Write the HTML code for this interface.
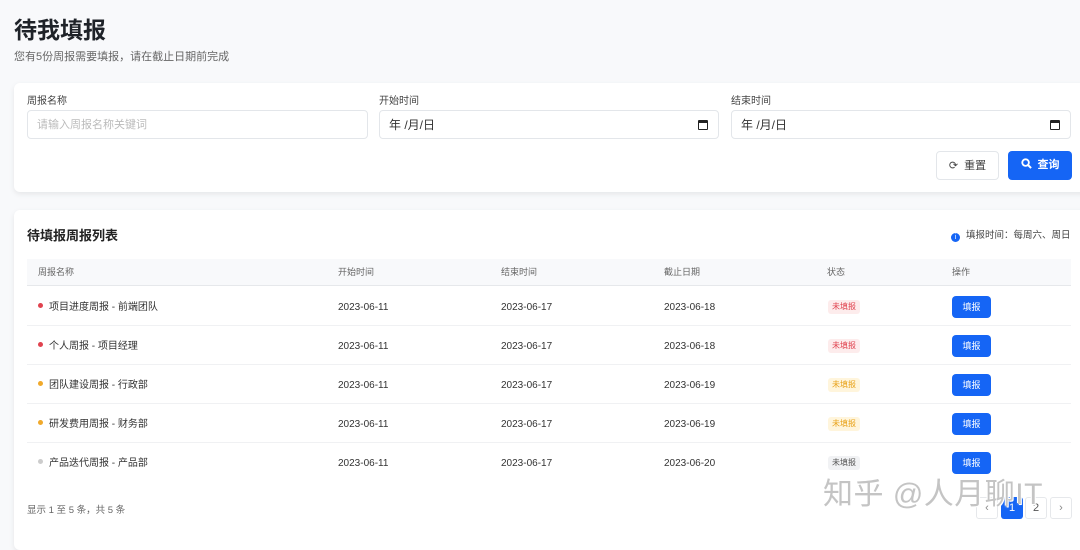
<!DOCTYPE html>
<html><head><meta charset="utf-8"><style>
*{margin:0;padding:0;box-sizing:border-box}
body{width:1080px;height:533px;overflow:hidden;background:#f8f9fb;font-family:"Liberation Sans","Noto Sans CJK SC",sans-serif;color:#333;position:relative}
.abs{position:absolute}
h1{position:absolute;left:14px;top:11px;font-size:23px;font-weight:700;color:#1f2329}
.sub{left:14px;top:48px;font-size:11px;color:#666}
.card{background:#fff;border-radius:6px;box-shadow:0 2px 6px rgba(0,0,0,.08)}
.lbl{font-size:10px;color:#444;line-height:12px}
.inp{height:29px;border:1px solid #e3e6ea;border-radius:4px;font-size:11px;color:#bbb;padding:0 9px;line-height:29px}
.inp.d{color:#333;font-size:12px}
.cal{position:absolute;right:10px;top:9px;width:10px;height:10px;border:1.5px solid #222;border-top-width:3px;border-radius:1px}
.btn{height:29px;border-radius:4px;font-size:11px;line-height:29px;text-align:center}
.th{font-size:9px;color:#666;line-height:12px}
.td{font-size:10px;color:#333;line-height:14px}
.dot{width:5px;height:5px;border-radius:50%;display:inline-block;margin-right:6px;vertical-align:2px}
.tag{font-size:8px;padding:2px 4px;border-radius:3px;line-height:10px}
.fb{width:39px;height:22px;background:#1565f5;color:#fff;border-radius:4px;font-size:9px;line-height:22px;text-align:center}
.line{left:27px;width:1044px;height:1px;background:#f0f1f3}
</style></head><body>
<h1>待我填报</h1>
<div class="abs sub">您有5份周报需要填报，请在截止日期前完成</div>

<div class="abs card" style="left:14px;top:83px;width:1080px;height:109px"></div>
<div class="abs lbl" style="left:27px;top:96px">周报名称</div>
<div class="abs lbl" style="left:379px;top:96px">开始时间</div>
<div class="abs lbl" style="left:731px;top:96px">结束时间</div>
<div class="abs inp" style="left:27px;top:110px;width:341px">请输入周报名称关键词</div>
<div class="abs inp d" style="left:379px;top:110px;width:340px">年 /月/日<span class="cal"></span></div>
<div class="abs inp d" style="left:731px;top:110px;width:340px">年 /月/日<span class="cal"></span></div>
<div class="abs btn" style="left:936px;top:151px;width:63px;border:1px solid #e3e6ea;color:#444">⟳&nbsp; 重置</div>
<div class="abs btn" style="left:1008px;top:151px;width:64px;background:#1565f5;color:#fff;font-weight:700">
<svg width="11" height="11" viewBox="0 0 12 12" style="vertical-align:-1px;margin-right:6px"><circle cx="5" cy="5" r="3.6" fill="none" stroke="#fff" stroke-width="2"/><path d="M7.6 7.6L11 11" stroke="#fff" stroke-width="2.2"/></svg>查询</div>

<div class="abs card" style="left:14px;top:210px;width:1080px;height:340px"></div>
<div class="abs" style="left:27px;top:225px;font-size:13px;font-weight:700;color:#222">待填报周报列表</div>
<div class="abs" style="left:951px;top:227px;font-size:9.5px;color:#444"><span style="display:inline-block;width:9px;height:9px;border-radius:50%;background:#1565f5;color:#fff;font-size:7px;line-height:9px;text-align:center;margin-right:6px;vertical-align:-1px">i</span>填报时间：每周六、周日</div>
<div class="abs" style="left:27px;top:259px;width:1044px;height:27px;background:#f8f9fb;border-bottom:1px solid #e6e8eb"></div>
<div class="abs th" style="left:38px;top:266px">周报名称</div>
<div class="abs th" style="left:338px;top:266px">开始时间</div>
<div class="abs th" style="left:501px;top:266px">结束时间</div>
<div class="abs th" style="left:664px;top:266px">截止日期</div>
<div class="abs th" style="left:827px;top:266px">状态</div>
<div class="abs th" style="left:952px;top:266px">操作</div>

<div class="abs line" style="top:325px"></div>
<div class="abs line" style="top:364px"></div>
<div class="abs line" style="top:403px"></div>
<div class="abs line" style="top:442px"></div>

<div class="abs td" style="left:38px;top:301px"><span class="dot" style="background:#e0434f"></span>项目进度周报 - 前端团队</div>
<div class="abs td" style="left:38px;top:340px"><span class="dot" style="background:#e0434f"></span>个人周报 - 项目经理</div>
<div class="abs td" style="left:38px;top:379px"><span class="dot" style="background:#f0a92b"></span>团队建设周报 - 行政部</div>
<div class="abs td" style="left:38px;top:418px"><span class="dot" style="background:#f0a92b"></span>研发费用周报 - 财务部</div>
<div class="abs td" style="left:38px;top:457px"><span class="dot" style="background:#ccc"></span>产品迭代周报 - 产品部</div>

<div class="abs td" style="left:338px;top:301px">2023-06-11</div><div class="abs td" style="left:501px;top:301px">2023-06-17</div><div class="abs td" style="left:664px;top:301px">2023-06-18</div>
<div class="abs td" style="left:338px;top:340px">2023-06-11</div><div class="abs td" style="left:501px;top:340px">2023-06-17</div><div class="abs td" style="left:664px;top:340px">2023-06-18</div>
<div class="abs td" style="left:338px;top:379px">2023-06-11</div><div class="abs td" style="left:501px;top:379px">2023-06-17</div><div class="abs td" style="left:664px;top:379px">2023-06-19</div>
<div class="abs td" style="left:338px;top:418px">2023-06-11</div><div class="abs td" style="left:501px;top:418px">2023-06-17</div><div class="abs td" style="left:664px;top:418px">2023-06-19</div>
<div class="abs td" style="left:338px;top:457px">2023-06-11</div><div class="abs td" style="left:501px;top:457px">2023-06-17</div><div class="abs td" style="left:664px;top:457px">2023-06-20</div>

<div class="abs tag" style="left:828px;top:300px;background:#fdecec;color:#e0434f">未填报</div>
<div class="abs tag" style="left:828px;top:339px;background:#fdecec;color:#e0434f">未填报</div>
<div class="abs tag" style="left:828px;top:378px;background:#fff5dc;color:#e8a21a">未填报</div>
<div class="abs tag" style="left:828px;top:417px;background:#fff5dc;color:#e8a21a">未填报</div>
<div class="abs tag" style="left:828px;top:456px;background:#f1f2f4;color:#555">未填报</div>

<div class="abs fb" style="left:952px;top:296px">填报</div>
<div class="abs fb" style="left:952px;top:335px">填报</div>
<div class="abs fb" style="left:952px;top:374px">填报</div>
<div class="abs fb" style="left:952px;top:413px">填报</div>
<div class="abs fb" style="left:952px;top:452px">填报</div>

<div class="abs" style="left:27px;top:502px;font-size:9.5px;color:#666">显示 1 至 5 条，共 5 条</div>
<div class="abs" style="left:976px;top:497px;width:22px;height:22px;border:1px solid #e6e8eb;border-radius:3px;font-size:11px;color:#888;text-align:center;line-height:20px">‹</div>
<div class="abs" style="left:1001px;top:497px;width:22px;height:22px;background:#1565f5;border-radius:3px;font-size:11px;color:#fff;text-align:center;line-height:22px">1</div>
<div class="abs" style="left:1025px;top:497px;width:22px;height:22px;border:1px solid #e6e8eb;border-radius:3px;font-size:11px;color:#555;text-align:center;line-height:20px">2</div>
<div class="abs" style="left:1050px;top:497px;width:22px;height:22px;border:1px solid #e6e8eb;border-radius:3px;font-size:11px;color:#888;text-align:center;line-height:20px">›</div>

<div class="abs" style="left:823px;top:469px;font-size:30px;color:#c4c4c4;letter-spacing:0.5px;text-shadow:0 0 2px #fff,1px 1px 0 #fff,-1px -1px 0 #fff;white-space:nowrap">知乎 @人月聊IT</div>
</body></html>
